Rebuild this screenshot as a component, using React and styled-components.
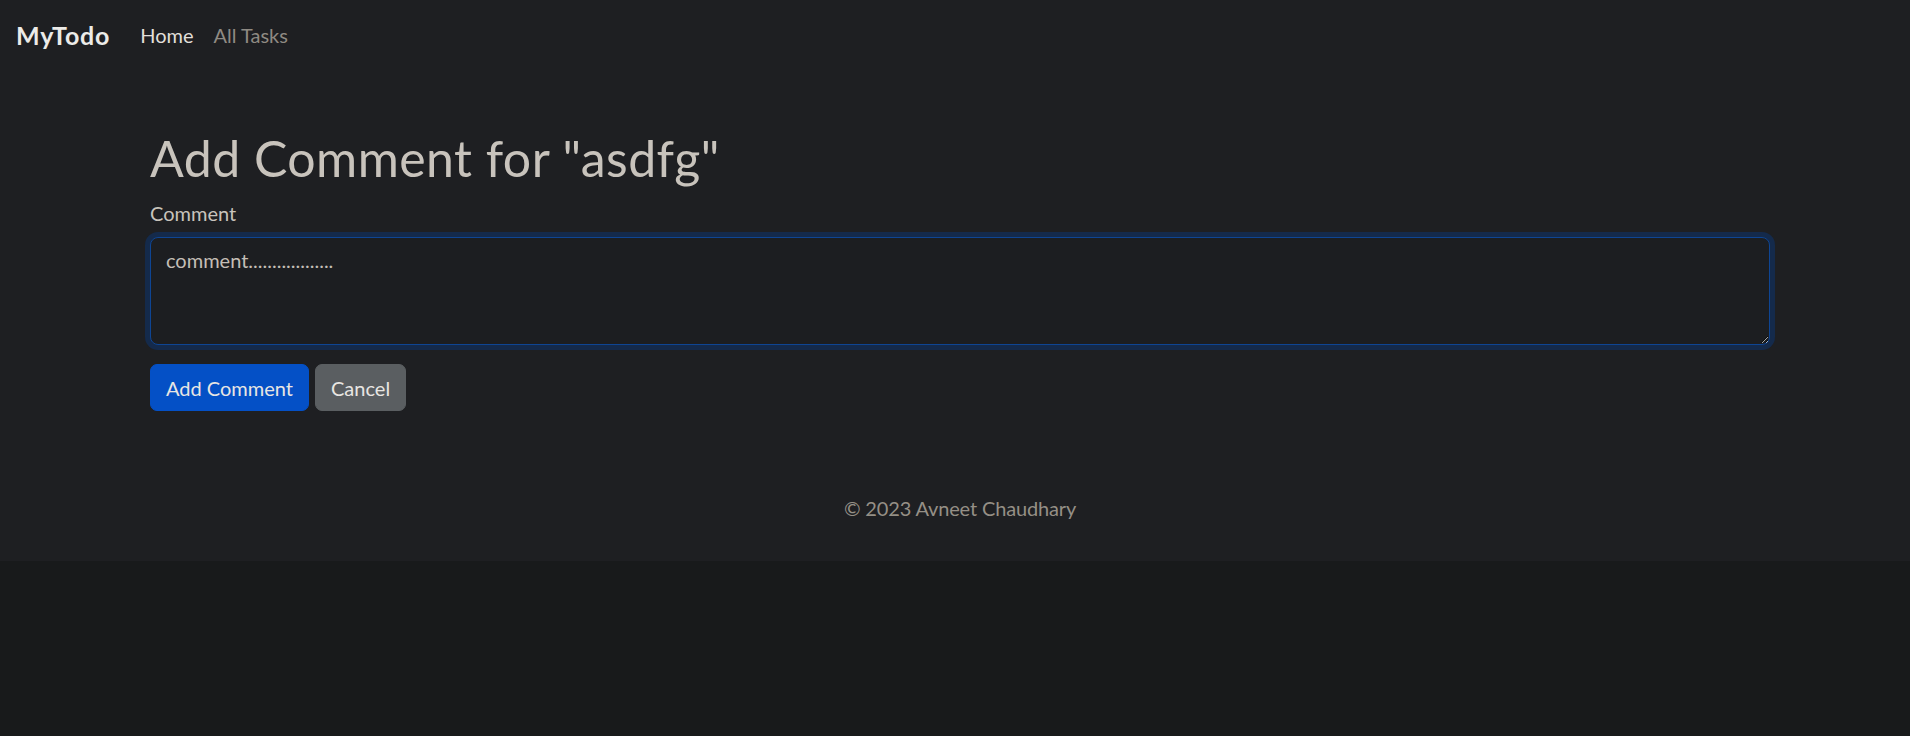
import React from "react";
import styled, { createGlobalStyle } from "styled-components";

const GlobalStyle = createGlobalStyle`
  html, body {
    margin: 0;
    padding: 0;
    background: #181a1b;
  }
  body {
    font-family: "Lato", "Liberation Sans", sans-serif;
    font-size: 20px;
    line-height: 30px;
    color: #e8e6e3;
  }
  * { box-sizing: border-box; }
`;

const Page = styled.div`
  background: #1e1f22;
`;

const Navbar = styled.nav`
  height: 70px;
  display: flex;
  align-items: center;
  padding: 0 16px;
`;

const Brand = styled.a`
  font-size: 25px;
  font-weight: 700;
  line-height: 37px;
  letter-spacing: 0.8px;
  color: #ecebe8;
  text-decoration: none;
  margin-right: 20px;
`;

const NavList = styled.div`
  display: flex;
  align-items: center;
`;

const NavLink = styled.a`
  padding: 0 10px;
  font-size: 20px;
  color: ${(p) => (p.$active ? "#e2dfda" : "#8f8a83")};
  text-decoration: none;
`;

const Main = styled.main`
  margin-left: 150px;
  width: 1620px;
  padding-top: 58px;
`;

const Title = styled.h1`
  margin: 0 0 10px;
  font-size: 50px;
  font-weight: 400;
  line-height: 60px;
  letter-spacing: 0.45px;
  color: #c8c3bc;
`;

const Label = styled.label`
  display: block;
  margin-bottom: 9px;
  color: #c8c3bc;
`;

const TextArea = styled.textarea`
  display: block;
  width: 100%;
  height: 108px;
  margin: 0 0 19px;
  padding: 7px 15px;
  font-family: inherit;
  font-size: 20px;
  line-height: 30px;
  color: #c4beb6;
  background: #1c1e21;
  border: 1px solid #0e4593;
  border-radius: 8px;
  box-shadow: 0 0 0 5px #142a4b;
  outline: none;
  resize: vertical;
`;

const Actions = styled.div`
  display: flex;
  gap: 6px;
`;

const Button = styled.button`
  height: 47px;
  padding: 0 15px;
  font-family: inherit;
  font-size: 20px;
  line-height: 30px;
  color: #e8e6e3;
  background: ${(p) => (p.$variant === "secondary" ? "#5a5e61" : "#0450c6")};
  border: 1px solid ${(p) => (p.$variant === "secondary" ? "#5a5e61" : "#0450c6")};
  border-radius: 7px;
  cursor: pointer;
`;

const Footer = styled.footer`
  width: 1620px;
  margin-left: 150px;
  padding: 82px 0 38px;
  text-align: center;
  color: #958f86;
  letter-spacing: -0.15px;
`;

export default function App() {
  return (
    <>
      <GlobalStyle />
      <Page>
        <Navbar>
          <Brand href="#">MyTodo</Brand>
          <NavList>
            <NavLink href="#" $active>Home</NavLink>
            <NavLink href="#">All Tasks</NavLink>
          </NavList>
        </Navbar>
        <Main>
          <Title>Add Comment for "asdfg"</Title>
          <form onSubmit={(e) => e.preventDefault()}>
            <Label htmlFor="comment">Comment</Label>
            <TextArea id="comment" defaultValue="comment.................." />
            <Actions>
              <Button type="submit">Add Comment</Button>
              <Button type="button" $variant="secondary">Cancel</Button>
            </Actions>
          </form>
        </Main>
        <Footer>© 2023 Avneet Chaudhary</Footer>
      </Page>
    </>
  );
}
